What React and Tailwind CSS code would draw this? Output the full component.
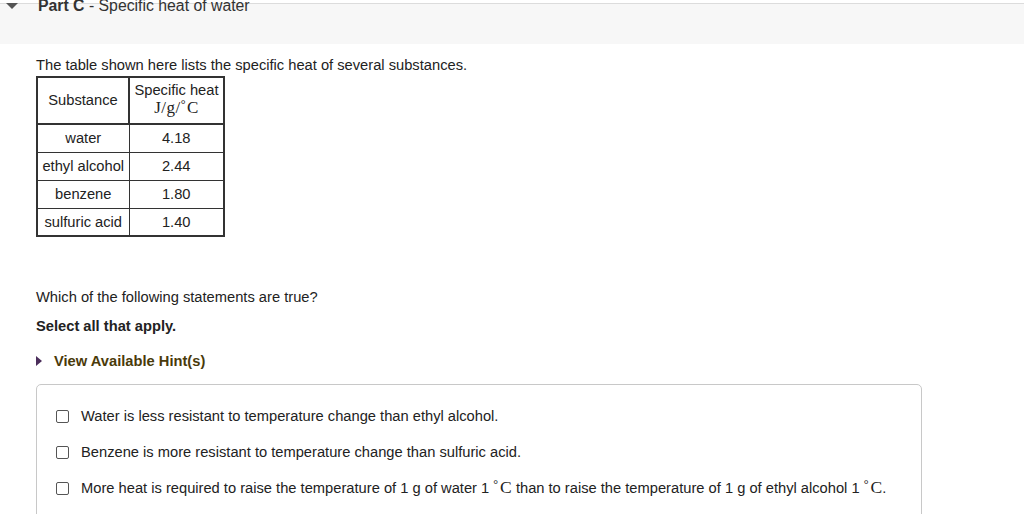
import React from 'react';

const rows = [
    ['water', '4.18'],
    ['ethyl alcohol', '2.44'],
    ['benzene', '1.80'],
    ['sulfuric acid', '1.40'],
];

const options = [
    'Water is less resistant to temperature change than ethyl alcohol.',
    'Benzene is more resistant to temperature change than sulfuric acid.',
];

function Deg() {
    return (
        <span className="font-['Liberation_Serif',serif] text-[17.5px] leading-[16px]">
            <span className="text-[12px] relative -top-[5px] mr-[2px]">°</span>C
        </span>
    );
}

export default function App() {
    return (
        <div className="w-[1024px] h-[514px] overflow-hidden bg-white text-[#222] font-['Liberation_Sans',Arial,sans-serif] text-[14.7px]">
            {/* Part header, scrolled half out of view */}
            <div className="h-[44px] bg-[#f7f7f7] overflow-hidden">
                <div className="h-[4px] border-b border-[#dcdcdc] bg-white"></div>
                <div className="flex items-center -mt-[6px] h-[15px] leading-[15px]">
                    <span className="ml-[6px] w-0 h-0 border-l-[6px] border-r-[6px] border-t-[6px] border-l-transparent border-r-transparent border-t-[#555] mt-[1px]"></span>
                    <span className="ml-[20px] text-[15.8px] text-[#333]">
                        <span className="font-bold">Part C</span> - Specific heat of water
                    </span>
                </div>
            </div>

            <div className="pl-[36px]">
                <p className="mt-[13px] leading-[16px]">The table shown here lists the specific heat of several substances.</p>

                {/* Specific heat table */}
                <table className="mt-[3px] border-collapse border-2 border-[#333] text-center">
                    <thead>
                        <tr className="h-[47px]">
                            <th className="border-2 border-[#333] font-normal w-[92px] px-1">Substance</th>
                            <th className="border-2 border-[#333] font-normal w-[95px] px-1 leading-[16px]">
                                <div>Specific heat</div>
                                <div className="font-['Liberation_Serif',serif] text-[17px] leading-[19px] tracking-[0.5px]">
                                    J/g/<span className="text-[12px] relative -top-[5px] mr-[1px]">°</span>C
                                </div>
                            </th>
                        </tr>
                    </thead>
                    <tbody>
                        {rows.map(([name, value]) => (
                            <tr key={name} className="h-[28px]">
                                <td className="border border-[#333] border-l-2 px-1">{name}</td>
                                <td className="border border-[#333] border-r-2 px-1">{value}</td>
                            </tr>
                        ))}
                    </tbody>
                </table>

                <p className="mt-[52px] leading-[16px]">Which of the following statements are true?</p>
                <p className="mt-[13px] leading-[16px] font-bold">Select all that apply.</p>

                <div className="mt-[19px] flex items-center leading-[16px]">
                    <span className="w-0 h-0 border-t-[5px] border-b-[5px] border-l-[6px] border-t-transparent border-b-transparent border-l-[#4b2e5b]"></span>
                    <span className="ml-[12px] font-bold text-[#4a3a0a]">View Available Hint(s)</span>
                </div>

                {/* Answer choices */}
                <div className="mt-[15px] w-[886px] h-[200px] border border-[#c8c8c8] rounded-[5px] pt-[23px] pl-[19px]">
                    {options.map((text) => (
                        <label key={text} className="flex items-center h-[16px] mb-[20px]">
                            <span className="w-[13px] h-[13px] border border-[#555] rounded-[2px] bg-white"></span>
                            <span className="ml-[12px]">{text}</span>
                        </label>
                    ))}
                    <label className="flex items-center h-[16px]">
                        <span className="w-[13px] h-[13px] border border-[#555] rounded-[2px] bg-white"></span>
                        <span className="ml-[12px] whitespace-nowrap">
                            More heat is required to raise the temperature of 1 g of water 1 <Deg /> than to raise the temperature of 1 g of ethyl alcohol 1 <Deg />.
                        </span>
                    </label>
                </div>
            </div>
        </div>
    );
}
